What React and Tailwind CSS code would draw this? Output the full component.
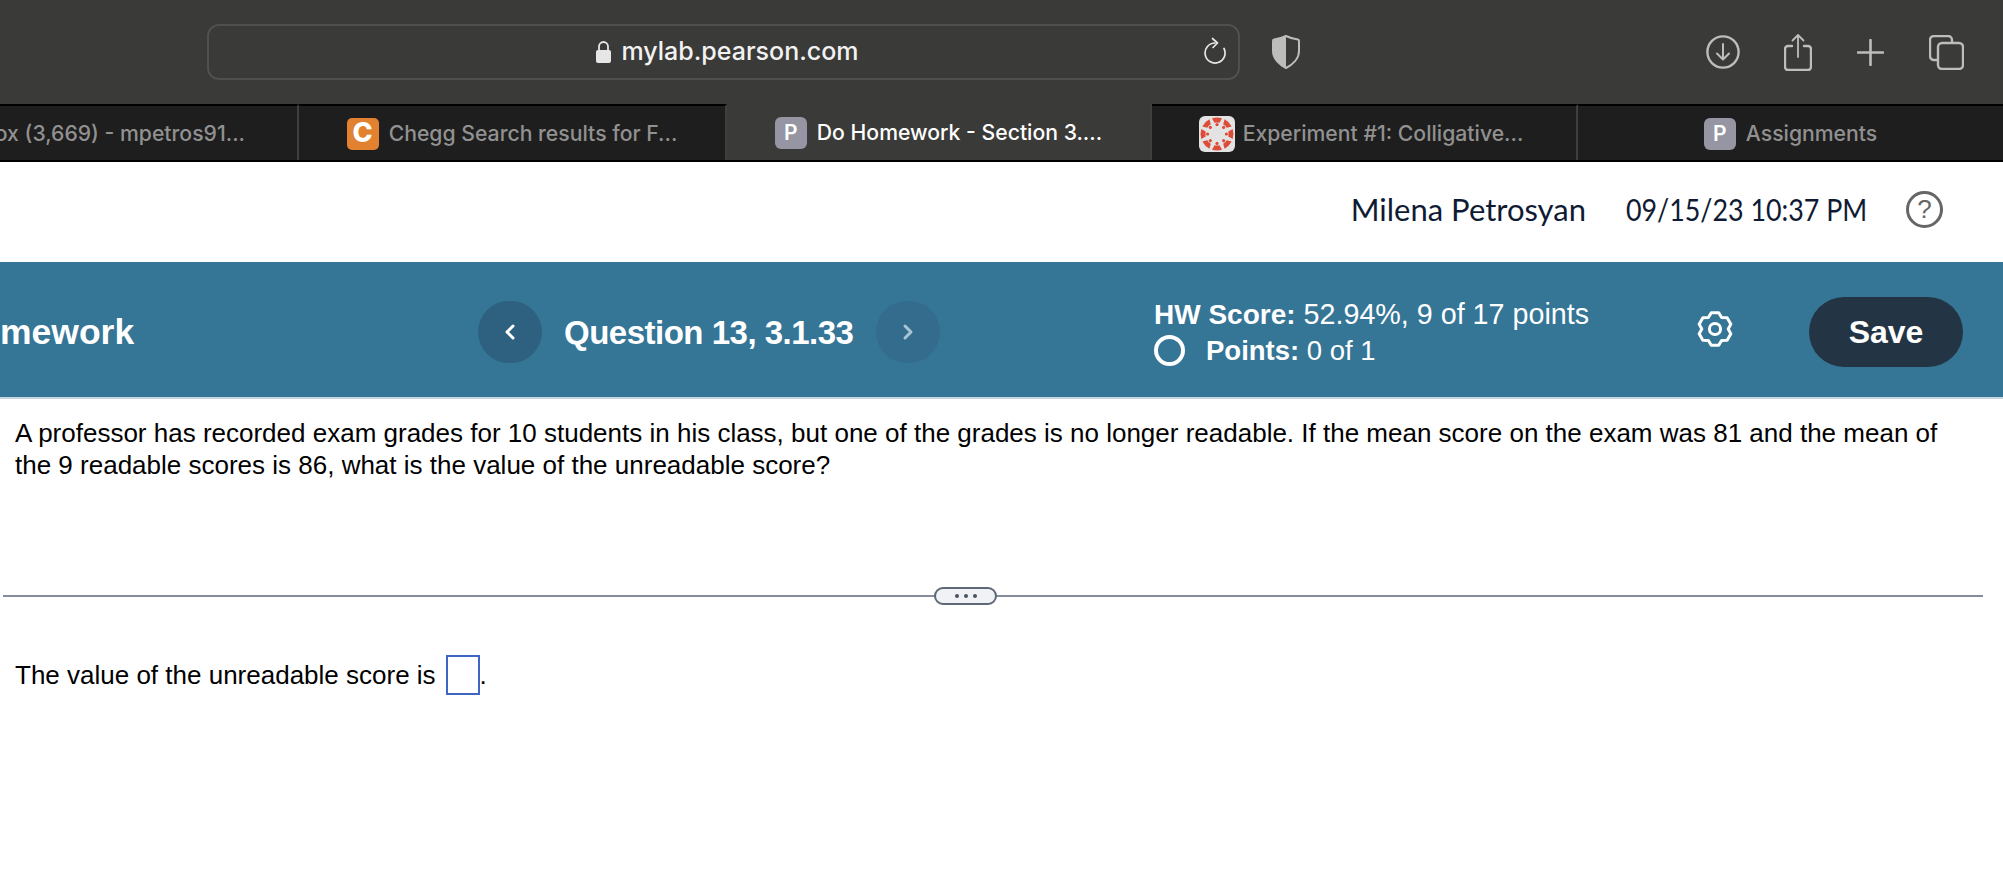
import { ChevronLeft, ChevronRight } from 'lucide-react'

const sans = "font-['Liberation_Sans',Arial,sans-serif]"

function PBadge() {
  return (
    <span className="flex h-[32px] w-[32px] shrink-0 items-center justify-center rounded-[6px] bg-[#9595a3] text-[21px] font-semibold text-white">P</span>
  )
}

function CanvasLogo() {
  const spokes = [0, 45, 90, 135, 180, 225, 270, 315]
  return (
    <span className="h-[36px] w-[36px] shrink-0 rounded-[6px] bg-[#e3e3e3]">
      <svg width="36" height="36" viewBox="0 0 36 36">
        {spokes.map(a => (
          <g key={a} transform={`rotate(${a} 18 18)`} fill="#dd4b39">
            <path d="M13 2.3 A16.5 16.5 0 0 1 23 2.3 L20.5 6.7 A12 12 0 0 0 15.5 6.7 Z" />
            <circle cx="18" cy="8.6" r="1.6" />
          </g>
        ))}
      </svg>
    </span>
  )
}

// six lobed cog, same outline as the one on the homework bar
function Cog() {
  const pts = []
  for (let i = 0; i < 6; i++) {
    const a = i * 60
    for (const [r, d] of [[13.2, -30], [16.6, -13], [16.6, 13]]) {
      const t = ((a + d - 90) * Math.PI) / 180
      pts.push(`${(18 + r * Math.cos(t)).toFixed(2)},${(18 + r * Math.sin(t)).toFixed(2)}`)
    }
  }
  return (
    <svg className="-mt-[6px]" width="36" height="36" viewBox="0 0 36 36" fill="none" stroke="white" strokeWidth="3" strokeLinejoin="round">
      <polygon points={pts.join(' ')} />
      <circle cx="18" cy="18" r="5.6" />
    </svg>
  )
}

function Tab({ active, icon, children, className = '' }) {
  return (
    <div className={`flex h-full items-center justify-center gap-[10px] ${active ? 'bg-[#3a3a38] pt-[2px] text-white' : 'border-t-2 border-t-black bg-[#1e1e1e] pt-[1px] text-[#919191]'} ${className}`}>
      {icon}
      <span className="whitespace-nowrap">{children}</span>
    </div>
  )
}

export default function App() {
  return (
    <div className="h-[885px] w-[2003px] overflow-hidden bg-white">
      {/* safari toolbar */}
      <div className="flex h-[104px] items-center bg-[#3a3a38] font-['Inter',sans-serif]">
        <div className="relative ml-[207px] flex h-[56px] w-[1033px] items-center justify-center gap-[10px] rounded-[12px] border-2 border-[#505050] pl-[6px] text-[25px] font-medium text-[#f2f2f2]">
          <svg width="17" height="26" viewBox="0 0 17 26" fill="none">
            <path d="M4 12V7.5a4.5 4.5 0 0 1 9 0V12" stroke="#e6e6e6" strokeWidth="1.8" />
            <rect x="1" y="11" width="15" height="13" rx="2" fill="#e6e6e6" />
          </svg>
          <span>mylab.pearson.com</span>
          <svg className="absolute right-[11px] top-[11px]" width="24" height="28" viewBox="0 0 24 28" fill="none" stroke="#e6e6e6" strokeWidth="1.7" strokeLinecap="round" strokeLinejoin="round">
            <path d="M12 6A10 10 0 1 0 21 11.5" />
            <path d="M9.5 1.5 14.5 6 10 10.5" />
          </svg>
        </div>
        <svg className="ml-[32px]" width="28" height="34" viewBox="0 0 28 34" fill="none">
          <path d="M14 1C18 3 22 4 26 4.5Q27 4.6 27 6V16C27 24 20 30 14 33C8 30 1 24 1 16V6Q1 4.6 2 4.5C6 4 10 3 14 1Z" stroke="#bdbdbd" strokeWidth="2" />
          <path d="M14 1C10 3 6 4 2 4.5Q1 4.6 1 6V16C1 24 8 30 14 33Z" fill="#bdbdbd" />
        </svg>
        <svg className="ml-[406px]" width="34" height="34" viewBox="0 0 34 34" fill="none" stroke="#bdbdbd" strokeWidth="2.4" strokeLinecap="round" strokeLinejoin="round">
          <circle cx="17" cy="17" r="15.6" />
          <path d="M17 9v15M11 18.5l6 6 6-6" strokeWidth="2" />
        </svg>
        <svg className="ml-[44px]" width="28" height="38" viewBox="0 0 28 38" fill="none" stroke="#bdbdbd" strokeWidth="2.4" strokeLinecap="round" strokeLinejoin="round">
          <path d="M8 13H4a3 3 0 0 0-3 3v18a3 3 0 0 0 3 3h20a3 3 0 0 0 3-3V16a3 3 0 0 0-3-3h-4" />
          <path d="M14 24V2M8.5 7.5 14 2l5.5 5.5" strokeWidth="1.8" />
        </svg>
        <svg className="ml-[45px]" width="27" height="27" viewBox="0 0 27 27" stroke="#bdbdbd" strokeWidth="2.6" strokeLinecap="round">
          <path d="M13.5 1v25M1 13.5h25" />
        </svg>
        <svg className="ml-[45px]" width="35" height="35" viewBox="0 0 35 35" fill="none" stroke="#bdbdbd" strokeWidth="2.4">
          <path d="M9 25H5a4 4 0 0 1-4-4V5a4 4 0 0 1 4-4h14a4 4 0 0 1 4 4v3" />
          <rect x="9" y="8" width="25" height="26" rx="4" />
        </svg>
      </div>

      {/* tab strip */}
      <div className="flex h-[56px] divide-x-2 divide-[#3f3f3f] text-[21.2px] font-medium font-['Inter',sans-serif]">
        <div className="flex h-full w-[299px] items-center justify-end border-t-2 border-t-black bg-[#1e1e1e] pr-[52px] pt-[1px] text-[#919191]">
          <span className="whitespace-nowrap">ox (3,669) - mpetros91...</span>
        </div>
        <Tab className="w-[428px]" icon={
          <span className="flex h-[32px] w-[32px] shrink-0 items-center justify-center rounded-[5px] bg-[#e2812f] text-[27px] font-extrabold text-white">C</span>
        }>Chegg Search results for F...</Tab>
        <Tab active className="w-[425px]" icon={<PBadge />}>Do Homework - Section 3....</Tab>
        <Tab className="w-[426px] !gap-[8px] pr-[6px]" icon={<CanvasLogo />}>Experiment #1: Colligative...</Tab>
        <Tab className="w-[425px]" icon={<PBadge />}>Assignments</Tab>
      </div>
      <div className="h-[2px] bg-black" />

      {/* user row */}
      <div className="flex h-[100px] items-center justify-end pb-[6px] pr-[60px] text-[31px] text-[#0f1b33] font-['Lato',sans-serif]">
        <span>Milena Petrosyan</span>
        <span className="ml-[40px] w-[240px] origin-left scale-x-[0.865] whitespace-nowrap">09/15/23 10:37 PM</span>
        <span className={`ml-[40px] flex h-[37px] w-[37px] items-center justify-center rounded-full border-[3px] border-[#666] text-[26px] text-[#666] ${sans}`}>?</span>
      </div>

      {/* homework bar */}
      <div className={`flex h-[137px] items-center border-b-2 border-b-[#c9d5de] bg-[#357596] pt-[5px] text-white ${sans}`}>
        <div className="mt-[2px] w-[478px] text-[35.5px] font-bold">mework</div>
        <button className="flex h-[62px] w-[64px] items-center justify-center rounded-full bg-[#2d617f]">
          <ChevronLeft size={24} strokeWidth={3} />
        </button>
        <div className="mt-[1px] w-[334px] pl-[22px] text-[33px] font-bold tracking-[-0.5px]">Question 13, 3.1.33</div>
        <button className="flex h-[62px] w-[64px] items-center justify-center rounded-full bg-[#336c8c] text-[#a9c4d3]">
          <ChevronRight size={24} strokeWidth={3} />
        </button>
        <div className="ml-[214px] w-[543px] text-[28px] leading-[36px]">
          <div className="text-[28.7px]"><b className="text-[28px]">HW Score:</b> 52.94%, 9 of 17 points</div>
          <div className="flex items-center">
            <span className="mr-[21px] h-[31px] w-[31px] rounded-full border-[4px] border-white" />
            <span className="text-[27.5px]"><b>Points:</b> 0 of 1</span>
          </div>
        </div>
        <Cog />
        <button className="ml-[76px] h-[70px] w-[154px] rounded-full bg-[#233544] text-[32px] font-bold">Save</button>
      </div>

      {/* question */}
      <div className={`h-[196px] pl-[15px] pt-[18px] text-[26px] leading-[32px] text-black ${sans}`}>
        <p className="w-[1960px]">
          A professor has recorded exam grades for 10 students in his class, but one of the grades is no longer readable. If the mean score on the exam was 81 and the mean of<br />
          the 9 readable scores is 86, what is the value of the unreadable score?
        </p>
      </div>

      <div className="relative ml-[3px] h-[2px] w-[1980px] bg-[#858d9a]">
        <div className="absolute left-[931px] top-[-8px] flex h-[18px] w-[63px] items-center justify-center gap-[5px] rounded-full border-2 border-[#5f6875] bg-[#f0f2f5]">
          <span className="h-[4px] w-[4px] rounded-full bg-[#4a5360]" />
          <span className="h-[4px] w-[4px] rounded-full bg-[#4a5360]" />
          <span className="h-[4px] w-[4px] rounded-full bg-[#4a5360]" />
        </div>
      </div>

      {/* answer */}
      <div className={`flex items-center pl-[15px] pt-[58px] text-[26px] text-black ${sans}`}>
        <span>The value of the unreadable score is</span>
        <span className="ml-[10px] h-[40px] w-[34px] border-2 border-[#3f66c4]" />
        <span>.</span>
      </div>
    </div>
  )
}
